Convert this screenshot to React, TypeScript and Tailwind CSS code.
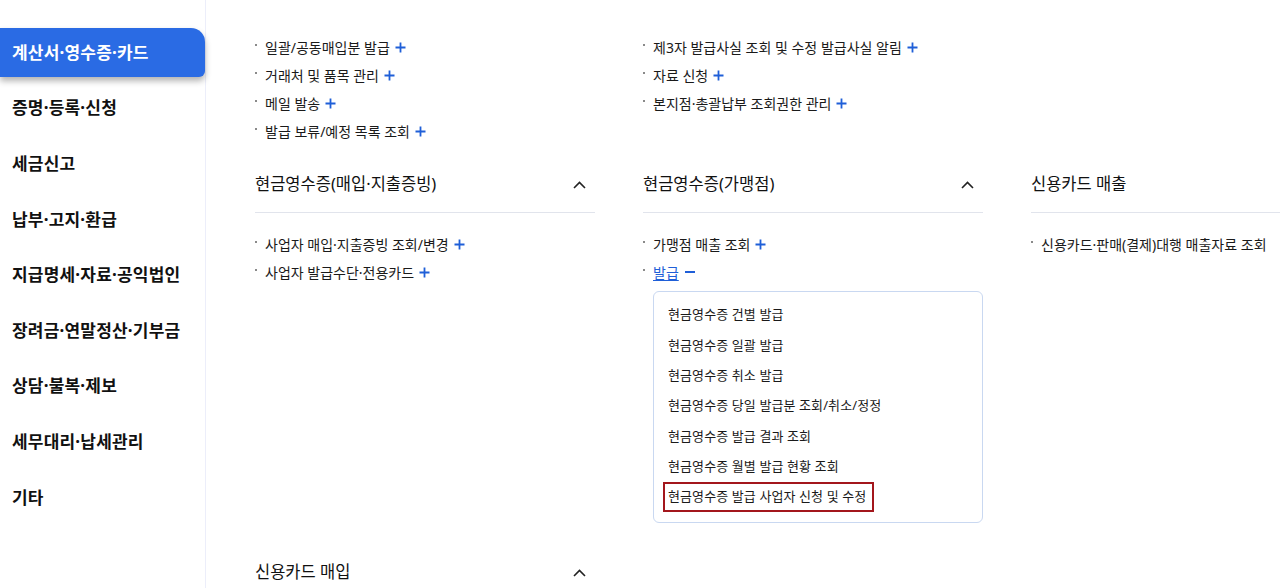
import React from "react";

type Item = { label: string; plus?: boolean };

const font = { fontFamily: '"Noto Sans", "Noto Sans CJK KR", sans-serif' };

const sideMenu = [
  "계산서·영수증·카드",
  "증명·등록·신청",
  "세금신고",
  "납부·고지·환급",
  "지급명세·자료·공익법인",
  "장려금·연말정산·기부금",
  "상담·불복·제보",
  "세무대리·납세관리",
  "기타",
];

const topLeft: Item[] = [
  { label: "일괄/공동매입분 발급", plus: true },
  { label: "거래처 및 품목 관리", plus: true },
  { label: "메일 발송", plus: true },
  { label: "발급 보류/예정 목록 조회", plus: true },
];

const topMid: Item[] = [
  { label: "제3자 발급사실 조회 및 수정 발급사실 알림", plus: true },
  { label: "자료 신청", plus: true },
  { label: "본지점·총괄납부 조회권한 관리", plus: true },
];

const issueSub = [
  "현금영수증 건별 발급",
  "현금영수증 일괄 발급",
  "현금영수증 취소 발급",
  "현금영수증 당일 발급분 조회/취소/정정",
  "현금영수증 발급 결과 조회",
  "현금영수증 월별 발급 현황 조회",
  "현금영수증 발급 사업자 신청 및 수정",
];

function Bullet() {
  return <span className="mr-[8px] mt-[-4px] inline-block h-[2px] w-[2px] shrink-0 bg-[#8a8a8a]" />;
}

function Plus() {
  return (
    <svg width="11" height="11" viewBox="0 0 11 11" className="ml-[5px] shrink-0">
      <path d="M5.5 0.5v10M0.5 5.5h10" stroke="#1f5fd8" strokeWidth="1.8" />
    </svg>
  );
}

function Chevron() {
  return (
    <svg width="13" height="8" viewBox="0 0 13 8" className="mr-[9px]">
      <path d="M1 7l5.5-5.5L12 7" fill="none" stroke="#222" strokeWidth="1.6" />
    </svg>
  );
}

function List({ items }: { items: Item[] }) {
  return (
    <ul>
      {items.map((it) => (
        <li key={it.label} className="flex h-[28px] items-center text-[14px] text-[#1a1a1a]">
          <Bullet />
          <span>{it.label}</span>
          {it.plus && <Plus />}
        </li>
      ))}
    </ul>
  );
}

function Header({ title, chevron = true }: { title: string; chevron?: boolean }) {
  return (
    <div className="flex h-[56px] items-center justify-between border-b border-[#e1e4ec]">
      <span className="text-[16.5px] text-[#111]">{title}</span>
      {chevron && <Chevron />}
    </div>
  );
}

export default function App() {
  return (
    <div className="flex h-[588px] w-[1280px] overflow-hidden bg-white" style={font}>
      <aside className="w-[206px] shrink-0 border-r border-[#eceefa] pt-[28px]">
        <ul className="flex flex-col gap-[6.6px]">
          {sideMenu.map((m, i) => (
            <li
              key={m}
              className={
                i === 0
                  ? "flex h-[49px] items-center rounded-tr-[14px] rounded-br-[6px] bg-[#2a6be4] pl-[12px] text-[17px] font-bold tracking-[0.2px] text-white shadow-[0_4px_6px_rgba(0,0,0,0.3)]"
                  : "flex h-[49px] items-center pl-[12px] text-[17px] font-bold tracking-[0.2px] text-[#111]"
              }
            >
              {m}
            </li>
          ))}
        </ul>
      </aside>

      <main className="pl-[49px] pt-[33px]">
        <div className="grid grid-cols-[340px_340px_340px] gap-x-[48px]">
          <div className="pb-[12px]">
            <List items={topLeft} />
          </div>
          <div className="pb-[12px]">
            <List items={topMid} />
          </div>
          <div />

          <section className="pb-[22px]">
            <Header title="현금영수증(매입·지출증빙)" />
            <div className="pt-[17px]">
              <List
                items={[
                  { label: "사업자 매입·지출증빙 조회/변경", plus: true },
                  { label: "사업자 발급수단·전용카드", plus: true },
                ]}
              />
            </div>
          </section>

          <section className="pb-[22px]">
            <Header title="현금영수증(가맹점)" />
            <div className="pt-[17px]">
              <List items={[{ label: "가맹점 매출 조회", plus: true }]} />
              <div className="flex h-[28px] items-center text-[14px]">
                <Bullet />
                <span className="text-[#1f5fd8] underline underline-offset-2">발급</span>
                <span className="ml-[6px] inline-block h-[2px] w-[10px] bg-[#1f5fd8]" />
              </div>
              <ul className="ml-[10px] mt-[5px] rounded-[6px] border border-[#c9d8f1] pb-[10px] pl-[9px] pr-[10px] pt-[8px]">
                {issueSub.map((s, i) => (
                  <li key={s} className="flex h-[30.33px]">
                    <span
                      className={
                        i === issueSub.length - 1
                          ? "flex items-center border-2 border-[#a3161c] pl-[3px] pr-[6px] text-[13px] tracking-[0.1px] text-[#1a1a1a]"
                          : "flex items-center border-2 border-transparent pl-[3px] text-[13px] tracking-[0.1px] text-[#1a1a1a]"
                      }
                    >
                      {s}
                    </span>
                  </li>
                ))}
              </ul>
            </div>
          </section>

          <section className="pb-[22px]">
            <Header title="신용카드 매출" />
            <div className="pt-[17px]">
              <List items={[{ label: "신용카드·판매(결제)대행 매출자료 조회" }]} />
            </div>
          </section>

          <section>
            <Header title="신용카드 매입" />
          </section>
        </div>
      </main>
    </div>
  );
}
